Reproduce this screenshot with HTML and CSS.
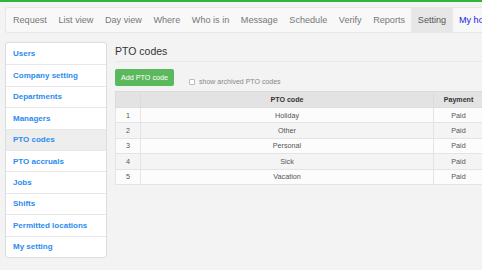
FILE: index.html
```html
<!DOCTYPE html>
<html lang="en">
<head>
    <meta charset="UTF-8">
    <title>PTO codes</title>
    <link rel="stylesheet" href="styles.css">
</head>
<body>
    <div class="topline"></div>

    <div class="navbar">
        <a href="#" class="nav-item first">Request</a>
        <a href="#" class="nav-item">List view</a>
        <a href="#" class="nav-item">Day view</a>
        <a href="#" class="nav-item">Where</a>
        <a href="#" class="nav-item">Who is in</a>
        <a href="#" class="nav-item">Message</a>
        <a href="#" class="nav-item">Schedule</a>
        <a href="#" class="nav-item">Verify</a>
        <a href="#" class="nav-item">Reports</a>
        <a href="#" class="nav-item active">Setting</a>
        <a href="#" class="nav-item home">My home</a>
    </div>

    <div class="main">
        <!-- Левое меню -->
        <div class="sidebar">
            <a href="#" class="side-item">Users</a>
            <a href="#" class="side-item">Company setting</a>
            <a href="#" class="side-item">Departments</a>
            <a href="#" class="side-item">Managers</a>
            <a href="#" class="side-item active">PTO codes</a>
            <a href="#" class="side-item">PTO accruals</a>
            <a href="#" class="side-item">Jobs</a>
            <a href="#" class="side-item">Shifts</a>
            <a href="#" class="side-item">Permitted locations</a>
            <a href="#" class="side-item">My setting</a>
        </div>

        <div class="content">
            <h1 class="page-title">PTO codes</h1>

            <div class="toolbar">
                <button class="btn-add">Add PTO code</button>
                <label class="archived"><input type="checkbox"> show archived PTO codes</label>
            </div>

            <table class="codes">
                <thead>
                    <tr>
                        <th class="num"></th>
                        <th>PTO code</th>
                        <th class="pay">Payment</th>
                        <th class="extra"></th>
                    </tr>
                </thead>
                <tbody>
                    <tr><td class="num">1</td><td>Holiday</td><td>Paid</td><td></td></tr>
                    <tr><td class="num">2</td><td>Other</td><td>Paid</td><td></td></tr>
                    <tr><td class="num">3</td><td>Personal</td><td>Paid</td><td></td></tr>
                    <tr><td class="num">4</td><td>Sick</td><td>Paid</td><td></td></tr>
                    <tr><td class="num">5</td><td>Vacation</td><td>Paid</td><td></td></tr>
                </tbody>
            </table>
        </div>
    </div>
</body>
</html>
```

FILE: styles.css
```css
html, body {
    overflow: hidden;
}

body {
    font-family: Arial, 'Liberation Sans', sans-serif;
    margin: 0;
    padding: 0;
    background-color: #f3f3f3;
    width: 640px;
}

.topline {
    height: 2px;
    background-color: #31b53c;
}

/* Верхнее меню */
.navbar {
    margin: 5px 0 0 5px;
    height: 24px;
    background-color: #f8f8f8;
    border: 1px solid #e7e7e7;
    border-right: none;
    border-radius: 3px 0 0 3px;
    display: flex;
    align-items: stretch;
    white-space: nowrap;
}

.nav-item {
    display: flex;
    align-items: center;
    padding: 0 5.8px;
    font-size: 9.1px;
    color: #777777;
    text-decoration: none;
}

.nav-item.first {
    padding-left: 7px;
}

.nav-item.active {
    background-color: #e7e7e7;
    color: #555555;
    padding: 0 7px;
}

.nav-item.home {
    color: #1a1ae6;
}

.main {
    display: flex;
    align-items: flex-start;
    gap: 8px;
    margin: 9px 0 0 5px;
}

/* Левое меню */
.sidebar {
    width: 100px;
    flex: none;
    background-color: #ffffff;
    border: 1px solid #dddddd;
    border-radius: 3px;
    display: flex;
    flex-direction: column;
}

.side-item {
    height: 20.4px;
    display: flex;
    align-items: center;
    padding-left: 7px;
    font-size: 8px;
    font-weight: bold;
    color: #2b8cef;
    text-decoration: none;
    border-top: 1px solid #e8e8e8;
}

.side-item:first-child {
    border-top: none;
    height: 21.4px;
}

.side-item.active {
    background-color: #eeeeee;
}

.content {
    width: 420px;
    flex: none;
}

.page-title {
    margin: 3px 0 0 0;
    font-size: 10.5px;
    font-weight: normal;
    color: #333333;
    padding-bottom: 4px;
    border-bottom: 1px solid #e9e9e9;
}

.toolbar {
    display: flex;
    align-items: flex-end;
    margin-top: 7px;
    height: 17px;
}

.btn-add {
    width: 59px;
    height: 17px;
    padding: 0;
    border: none;
    border-radius: 2px;
    background-color: #5cb85c;
    color: #ffffff;
    font-family: Arial, 'Liberation Sans', sans-serif;
    font-size: 7.2px;
}

.archived {
    display: flex;
    align-items: center;
    margin-left: 15px;
    font-size: 7px;
    color: #888888;
    margin-bottom: 1px;
}

.archived input {
    appearance: none;
    width: 6px;
    height: 6px;
    margin: 0 4px 0 0;
    border: 1px solid #bbbbbb;
    border-radius: 1px;
    background-color: #ffffff;
}

/* Таблица */
.codes {
    margin-top: 5px;
    width: 100%;
    border-collapse: collapse;
    font-size: 7.2px;
    color: #555555;
    table-layout: fixed;
}

.codes th,
.codes td {
    border: 1px solid #e4e4e4;
    text-align: center;
    padding: 0;
}

.codes th {
    height: 15px;
    background-color: #e3e3e3;
    color: #333333;
    font-size: 7.1px;
    border-color: #dcdcdc;
}

.codes td {
    height: 14.4px;
}

.codes .num {
    width: 24px;
}

.codes .pay {
    width: 49px;
}

.codes .extra {
    width: 50px;
}

.codes tbody tr:nth-child(odd) {
    background-color: #fcfcfc;
}

.codes tbody tr:nth-child(even) {
    background-color: #f4f4f4;
}
```
